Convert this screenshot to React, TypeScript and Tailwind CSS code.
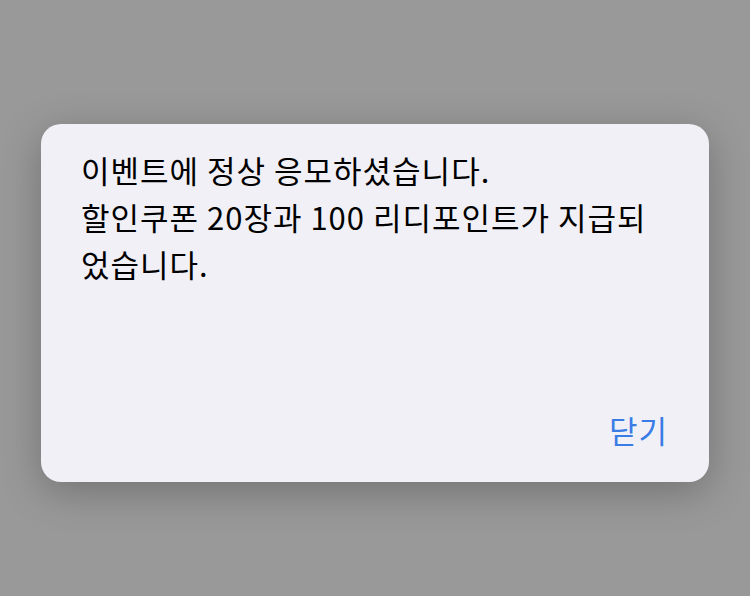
export default function App() {
  return (
    <div className="w-[750px] h-[596px] bg-[#999999] flex items-start justify-center pt-[124px] font-['Noto_Sans_CJK_KR',sans-serif]">
      <div className="w-[668px] h-[358px] bg-[#f1f0f6] rounded-[20px] shadow-[0_10px_40px_rgba(0,0,0,0.25)] flex flex-col pl-[40px] pr-[41px] pt-[22px] pb-[30px]">
        <p className="text-[31px] leading-[47px] text-black tracking-[1px]">
          이벤트에 정상 응모하셨습니다.
          <br />
          할인쿠폰 20장과 100 리디포인트가 지급되
          <br />
          었습니다.
        </p>
        <div className="mt-auto flex justify-end">
          <button className="text-[31px] leading-[44px] text-[#3a7ce6] tracking-[1px]">닫기</button>
        </div>
      </div>
    </div>
  );
}
